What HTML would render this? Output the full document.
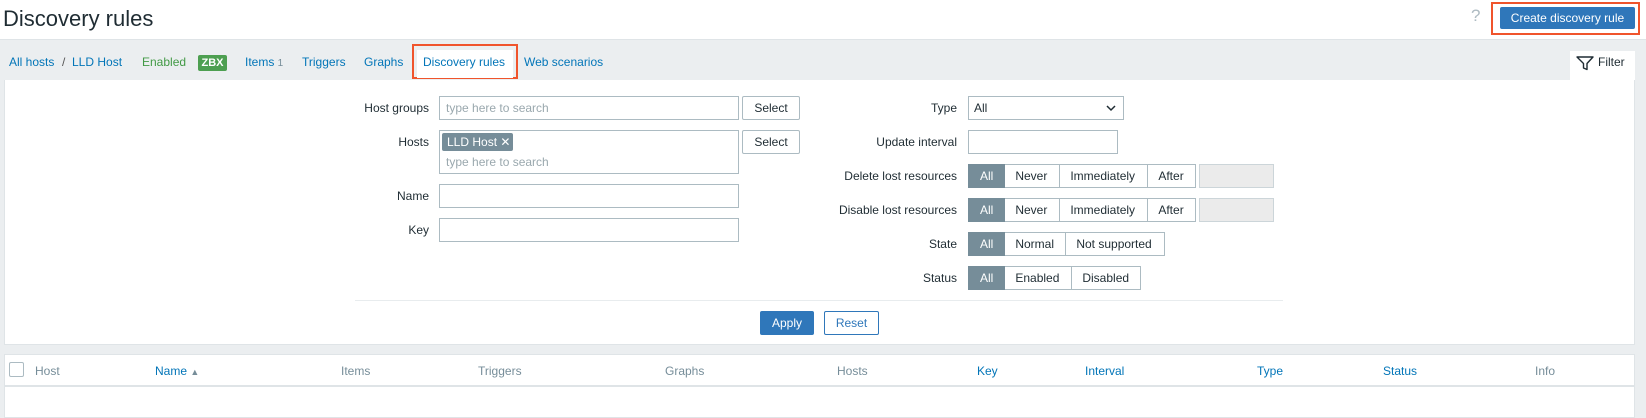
<!DOCTYPE html>
<html><head><meta charset="utf-8">
<style>
*{box-sizing:border-box;margin:0;padding:0}
body{width:1646px;height:418px;background:#ebeef0;font-family:"Liberation Sans",Arial,sans-serif;font-size:12px;color:#1f2c33;position:relative;overflow:hidden}
.a{position:absolute}
.hdr{left:0;top:0;width:1646px;height:40px;background:#fff;border-bottom:1px solid #dfe4e7}
.lnk{color:#0275b8}
.t{position:absolute;white-space:nowrap;line-height:14px}
.inp{position:absolute;border:1px solid #acbbc2;background:#fff;height:24px}
.btn{position:absolute;border:1px solid #acbbc2;background:#fff;height:24px;text-align:center;line-height:22px;border-radius:2px}
.seg{position:absolute;display:flex;height:24px}
.seg div{border:1px solid #acbbc2;border-left:none;padding:0 10px;line-height:22px;background:#fff}
.seg div:first-child{border-left:1px solid #768d99;background:#768d99;border-color:#768d99;color:#fff;padding:0 11px}
.lbl{position:absolute;text-align:right;line-height:24px}
.th{position:absolute;top:364px;color:#768d99;line-height:14px}
</style></head><body>
<div class="a hdr"></div>
<div class="t" style="left:3px;top:7px;font-size:22px;line-height:24px;color:#1f2c33">Discovery rules</div>
<div class="t" style="left:1471px;top:9px;font-size:17px;color:#aebbc2">?</div>
<div class="a" style="left:1491px;top:2px;width:149px;height:33px;border:2px solid #f0542c"></div>
<div class="a" style="left:1500px;top:7px;width:135px;height:22px;background:#2f77ba;border-radius:2px;color:#fff;text-align:center;line-height:22px">Create discovery rule</div>

<div class="t lnk" style="left:9px;top:55px">All hosts</div>
<div class="t" style="left:62px;top:55px;color:#555">/</div>
<div class="t lnk" style="left:72px;top:55px">LLD Host</div>
<div class="t" style="left:142px;top:55px;color:#429a46">Enabled</div>
<div class="a" style="left:198px;top:55px;width:29px;height:16px;background:#4d9f51;color:#fff;font-weight:bold;font-size:11px;text-align:center;line-height:16px;border-radius:2px">ZBX</div>
<div class="t lnk" style="left:245px;top:55px">Items <span style="font-size:10px;color:#768d99">1</span></div>
<div class="t lnk" style="left:302px;top:55px">Triggers</div>
<div class="t lnk" style="left:364px;top:55px">Graphs</div>
<div class="a" style="left:412px;top:44px;width:106px;height:35px;border:2px solid #f0542c"></div>
<div class="a" style="left:417px;top:50px;width:96px;height:28px;background:#fff"></div>
<div class="t lnk" style="left:423px;top:55px">Discovery rules</div>
<div class="t lnk" style="left:524px;top:55px">Web scenarios</div>

<div class="a" style="left:1570px;top:51px;width:65px;height:30px;background:#fff"></div>
<svg class="a" style="left:1576px;top:56px" width="19" height="15" viewBox="0 0 19 15"><path d="M1 1H17L11 7.5V13.5L7.5 12V7.5Z" fill="none" stroke="#1f2c33" stroke-width="1.4" stroke-linejoin="round"/></svg>
<div class="t" style="left:1598px;top:55px">Filter</div>

<div class="a" style="left:4px;top:80px;width:1631px;height:265px;background:#fff;border:1px solid #dfe4e7;border-top:none"></div>

<div class="lbl" style="left:329px;top:96px;width:100px">Host groups</div>
<div class="inp" style="left:439px;top:96px;width:300px;color:#9aa8ae;line-height:22px;padding-left:6px">type here to search</div>
<div class="btn" style="left:742px;top:96px;width:58px">Select</div>
<div class="lbl" style="left:329px;top:130px;width:100px;line-height:14px;top:135px">Hosts</div>
<div class="inp" style="left:439px;top:130px;width:300px;height:44px"></div>
<div class="a" style="left:442px;top:133px;width:71px;height:18px;background:#768d99;color:#fff;border-radius:2px;line-height:18px;padding-left:5px">LLD Host ✕</div>
<div class="t" style="left:446px;top:155px;color:#9aa8ae">type here to search</div>
<div class="btn" style="left:742px;top:130px;width:58px">Select</div>
<div class="lbl" style="left:329px;top:184px;width:100px">Name</div>
<div class="inp" style="left:439px;top:184px;width:300px"></div>
<div class="lbl" style="left:329px;top:218px;width:100px">Key</div>
<div class="inp" style="left:439px;top:218px;width:300px"></div>

<div class="lbl" style="left:797px;top:96px;width:160px">Type</div>
<div class="inp" style="left:968px;top:96px;width:156px;line-height:22px;padding-left:5px">All</div>
<svg class="a" style="left:1106px;top:104px" width="10" height="8"><path d="M1 2L5 6L9 2" fill="none" stroke="#1f2c33" stroke-width="1.5"/></svg>
<div class="lbl" style="left:797px;top:130px;width:160px">Update interval</div>
<div class="inp" style="left:968px;top:130px;width:150px"></div>
<div class="lbl" style="left:797px;top:164px;width:160px">Delete lost resources</div>
<div class="seg" style="left:968px;top:164px"><div>All</div><div style="width:55px">Never</div><div style="width:88px">Immediately</div><div style="width:48px">After</div></div>
<div class="a" style="left:1199px;top:164px;width:75px;height:24px;background:#ebebeb;border:1px solid #ccd5d9"></div>
<div class="lbl" style="left:797px;top:198px;width:160px">Disable lost resources</div>
<div class="seg" style="left:968px;top:198px"><div>All</div><div style="width:55px">Never</div><div style="width:88px">Immediately</div><div style="width:48px">After</div></div>
<div class="a" style="left:1199px;top:198px;width:75px;height:24px;background:#ebebeb;border:1px solid #ccd5d9"></div>
<div class="lbl" style="left:797px;top:232px;width:160px">State</div>
<div class="seg" style="left:968px;top:232px"><div>All</div><div style="width:61px">Normal</div><div style="width:99px">Not supported</div></div>
<div class="lbl" style="left:797px;top:266px;width:160px">Status</div>
<div class="seg" style="left:968px;top:266px"><div>All</div><div style="width:67px">Enabled</div><div style="width:69px">Disabled</div></div>

<div class="a" style="left:355px;top:300px;width:928px;height:1px;background:#e8ecee"></div>
<div class="a" style="left:760px;top:311px;width:54px;height:24px;background:#2f77ba;color:#fff;border-radius:2px;text-align:center;line-height:24px">Apply</div>
<div class="btn" style="left:824px;top:311px;width:55px;border-color:#2f77ba;color:#2f77ba">Reset</div>

<div class="a" style="left:4px;top:354px;width:1631px;height:64px;background:#fff;border:1px solid #dfe4e7"></div>
<div class="a" style="left:4px;top:385px;width:1631px;height:2px;background:#dfe4e7"></div>
<div class="a" style="left:9px;top:362px;width:15px;height:15px;border:1px solid #acbbc2;border-radius:2px;background:#fff"></div>
<div class="th" style="left:35px">Host</div>
<div class="th lnk" style="left:155px;color:#0275b8">Name <span style="font-size:9px;color:#768d99">▲</span></div>
<div class="th" style="left:341px">Items</div>
<div class="th" style="left:478px">Triggers</div>
<div class="th" style="left:665px">Graphs</div>
<div class="th" style="left:837px">Hosts</div>
<div class="th" style="left:977px;color:#0275b8">Key</div>
<div class="th" style="left:1085px;color:#0275b8">Interval</div>
<div class="th" style="left:1257px;color:#0275b8">Type</div>
<div class="th" style="left:1383px;color:#0275b8">Status</div>
<div class="th" style="left:1535px">Info</div>
</body></html>
